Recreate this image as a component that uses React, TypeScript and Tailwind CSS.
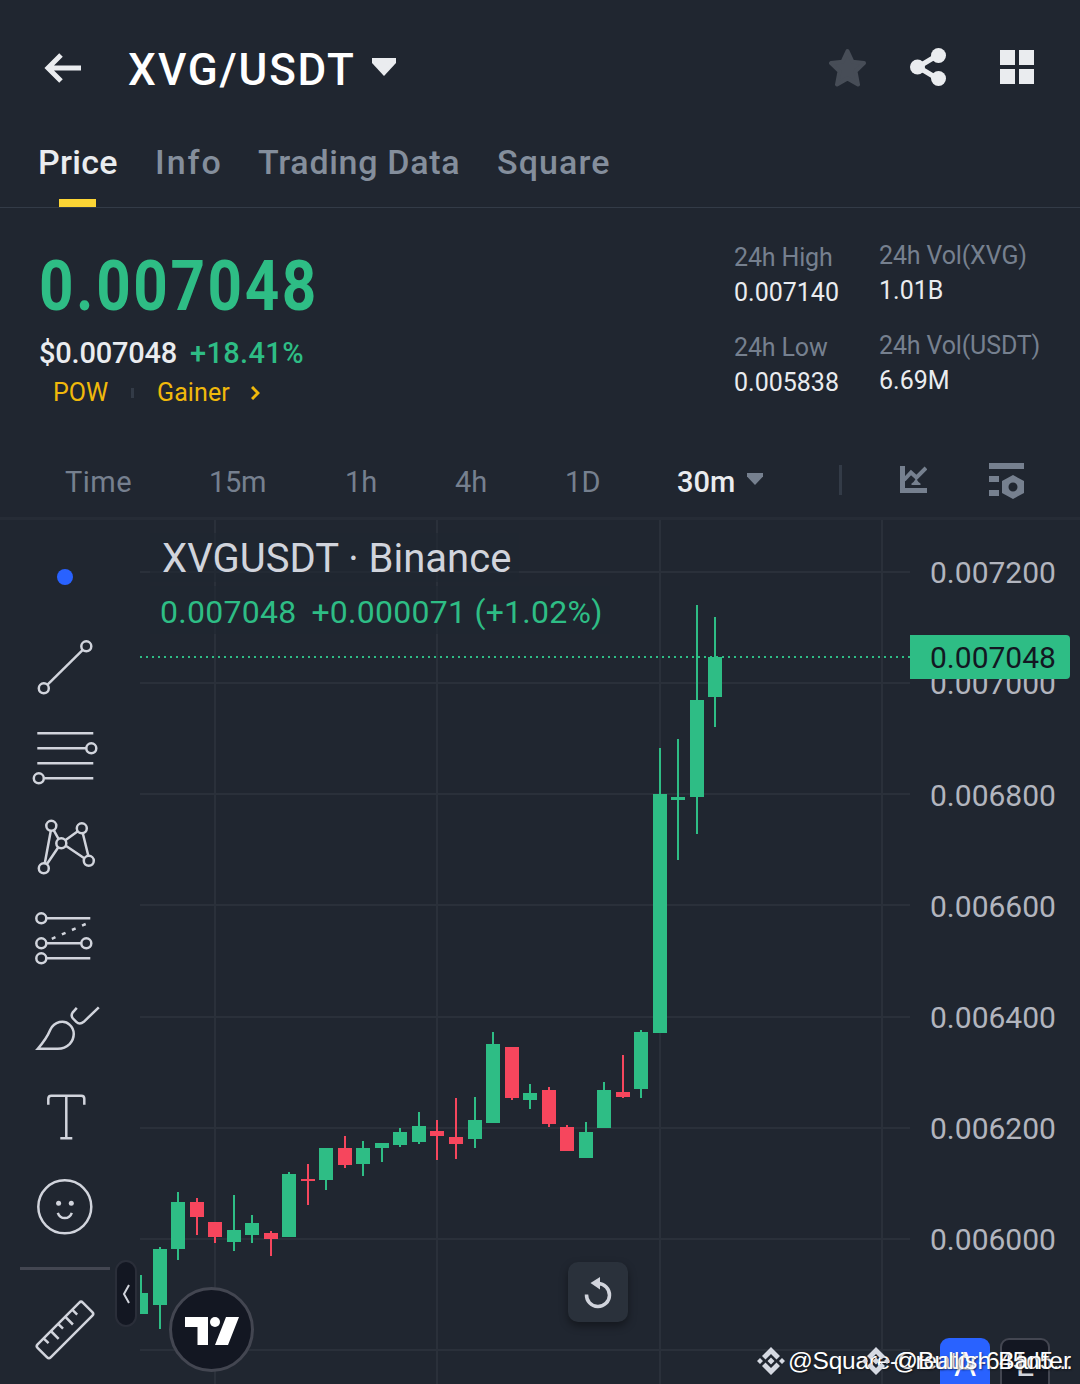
import { ReactNode } from "react"
import clsx from "clsx"

type Candle = { x: number; top: number; bottom: number; high: number; low: number; down?: boolean }

// pixel geometry inside the 770x864 chart pane
const candles: Candle[] = [
    { x: 0, top: 773, bottom: 794, high: 755, low: 794 },
    { x: 20, top: 729, bottom: 785, high: 727, low: 809 },
    { x: 38, top: 682, bottom: 729, high: 672, low: 740 },
    { x: 57, top: 682, bottom: 697, high: 678, low: 715, down: true },
    { x: 75, top: 702, bottom: 717, high: 702, low: 723, down: true },
    { x: 94, top: 710, bottom: 722, high: 675, low: 731 },
    { x: 112, top: 703, bottom: 715, high: 695, low: 723 },
    { x: 131, top: 713, bottom: 719, high: 711, low: 736, down: true },
    { x: 149, top: 654, bottom: 717, high: 652, low: 717 },
    { x: 168, top: 659, bottom: 661, high: 644, low: 685, down: true },
    { x: 186, top: 628, bottom: 660, high: 628, low: 670 },
    { x: 205, top: 628, bottom: 645, high: 616, low: 648, down: true },
    { x: 223, top: 628, bottom: 644, high: 621, low: 656 },
    { x: 242, top: 623, bottom: 628, high: 623, low: 642 },
    { x: 260, top: 612, bottom: 625, high: 608, low: 627 },
    { x: 279, top: 606, bottom: 622, high: 592, low: 624 },
    { x: 297, top: 611, bottom: 616, high: 600, low: 640, down: true },
    { x: 316, top: 617, bottom: 624, high: 578, low: 639, down: true },
    { x: 335, top: 600, bottom: 619, high: 577, low: 628 },
    { x: 353, top: 524, bottom: 603, high: 512, low: 603 },
    { x: 372, top: 527, bottom: 578, high: 527, low: 580, down: true },
    { x: 390, top: 573, bottom: 580, high: 564, low: 589 },
    { x: 409, top: 570, bottom: 604, high: 567, low: 607, down: true },
    { x: 427, top: 607, bottom: 631, high: 605, low: 631, down: true },
    { x: 446, top: 612, bottom: 638, high: 602, low: 638 },
    { x: 464, top: 570, bottom: 608, high: 562, low: 608 },
    { x: 483, top: 572, bottom: 577, high: 535, low: 578, down: true },
    { x: 501, top: 512, bottom: 569, high: 510, low: 578 },
    { x: 520, top: 274, bottom: 513, high: 228, low: 513 },
    { x: 538, top: 277, bottom: 280, high: 219, low: 340 },
    { x: 557, top: 180, bottom: 277, high: 85, low: 314 },
    { x: 575, top: 137, bottom: 177, high: 97, low: 207 },
]

const rows = [51, 162, 273, 384, 496, 607, 718, 829]
const cols = [74, 296, 519, 741]
const prices = ["0.007200", "0.007000", "0.006800", "0.006600", "0.006400", "0.006200", "0.006000"]

function Header() {
    return (
        <header className="flex h-[136px] items-center pl-[44px] pr-[46px]">
            <svg className="h-[32px] w-[38px]" viewBox="0 0 38 32" fill="none" stroke="#eaecef" strokeWidth="5">
                <path d="M37 16H4M17 3L4 16l13 13" />
            </svg>
            <h1 className="ml-[46px] mt-[3px] w-[226px] whitespace-nowrap text-[44px] font-medium leading-none tracking-[1.800px] text-white">XVG/USDT</h1>
            <svg className="ml-[18px] mb-[3px] h-[18px] w-[24px]" viewBox="0 0 24 18" fill="#eaecef">
                <path d="M0 0h24v5L12 18 0 5z" />
            </svg>
            <div className="mb-[2px] ml-auto flex items-center">
                <svg className="h-[40px] w-[38px]" viewBox="0 0 38 40" fill="#474d57" stroke="#474d57" strokeWidth="4" strokeLinejoin="round">
                    <path d="M18.500 4l5 10.800 11.500 1.300-8.500 8.200 2.500 13.200-10.500-6-10.500 6 2.500-13.200L2 16.100l11.500-1.300z" />
                </svg>
                <svg className="ml-[43px] h-[40px] w-[36px]" viewBox="0 0 36 40" fill="#eaecef">
                    <path d="M28 8L8 20l20 12" fill="none" stroke="#eaecef" strokeWidth="5" />
                    <circle cx="28.500" cy="8.500" r="7.500" />
                    <circle cx="7.500" cy="20" r="7.500" />
                    <circle cx="28.500" cy="31.500" r="7.500" />
                </svg>
                <svg className="ml-[54px] h-[34px] w-[34px]" viewBox="0 0 34 34" fill="#eaecef">
                    <path d="M0 0h15v15H0zM19 0h15v15H19zM0 19h15v15H0zM19 19h15v15H19z" />
                </svg>
            </div>
        </header>
    )
}

function Tabs() {
    return (
        <nav className="flex h-[72px] border-b border-[#333b47] pl-[38px] text-[34px] font-medium leading-[52px] text-[#848e9c]">
            <div className="flex w-[117px] flex-col text-[#eaecef]">
                <span className="h-[63px] whitespace-nowrap tracking-[0.300px]">Price</span>
                <span className="ml-[21px] h-[8px] w-[37px] bg-[#fcd535]" />
            </div>
            <span className="w-[103px] whitespace-nowrap tracking-[2px]">Info</span>
            <span className="w-[239px] whitespace-nowrap tracking-[0.700px]">Trading Data</span>
            <span className="whitespace-nowrap tracking-[1.100px]">Square</span>
        </nav>
    )
}

function Stat({ label, value }: { label: string; value: string }) {
    return (
        <div className="h-[90px] whitespace-nowrap text-[25px] leading-[35px]">
            <div className="tracking-[-0.150px] text-[#76808f]">{label}</div>
            <div className="text-[#eaecef]">{value}</div>
        </div>
    )
}

function PriceSummary() {
    return (
        <section className="flex h-[234px]">
            <div className="w-[734px] pl-[39px] pt-[42px]">
                <div className="h-[72px] origin-left scale-x-[0.86] whitespace-nowrap text-[70px] font-bold leading-[73px] tracking-[3px] text-[#2ebd85]">0.007048</div>
                <div className="mt-[12px] flex h-[40px] items-center whitespace-nowrap text-[29px] font-medium">
                    <span className="w-[151px] tracking-[-0.200px] text-[#eaecef]">$0.007048</span>
                    <span className="tracking-[0.350px] text-[#2ebd85]">+18.41%</span>
                </div>
                <div className="flex h-[38px] items-center pl-[14px] text-[25px] text-[#f0b90b]">
                    <span className="w-[78px]">POW</span>
                    <span className="h-[10px] w-[3px] bg-[#333b47]" />
                    <span className="ml-[23px] w-[94px] tracking-[0.100px]">Gainer</span>
                    <svg className="h-[14px] w-[9px]" viewBox="0 0 9 14" fill="none" stroke="#f0b90b" strokeWidth="3">
                        <path d="M1 1l6 6-6 6" />
                    </svg>
                </div>
            </div>
            <div className="w-[145px] pt-[32px]">
                <Stat label="24h High" value="0.007140" />
                <Stat label="24h Low" value="0.005838" />
            </div>
            <div className="pt-[30px]">
                <Stat label="24h Vol(XVG)" value="1.01B" />
                <Stat label="24h Vol(USDT)" value="6.69M" />
            </div>
        </section>
    )
}

function Intervals() {
    return (
        <div className="flex h-[75px] items-center whitespace-nowrap pl-[65px] pt-[7px] text-[29px] text-[#76808f]">
            <span className="w-[144px] tracking-[0.500px]">Time</span>
            <span className="w-[136px] tracking-[-0.300px]">15m</span>
            <span className="w-[110px]">1h</span>
            <span className="w-[110px]">4h</span>
            <span className="w-[112px] tracking-[0.300px]">1D</span>
            <span className="w-[70px] font-medium text-[#eaecef]">30m</span>
            <svg className="mb-[8px] h-[12px] w-[16px]" viewBox="0 0 16 12" fill="#76808f">
                <path d="M0 0h16v3.500L8 12 0 3.500z" />
            </svg>
            <span className="ml-[76px] mb-[7px] h-[30px] w-[3px] bg-[#333b47]" />
            <svg className="ml-[58px] mb-[7px] h-[28px] w-[27px]" viewBox="0 0 27 28" fill="none" stroke="#76808f" strokeWidth="5">
                <path d="M2.500 0v24.500H27" />
                <path d="M4 14l7-7.500 5.500 5L26 2" strokeWidth="4" />
                <path d="M16 12.500l2.500 3.500 2 1.500V19h-9v-1.500l2-1.500z" fill="#76808f" stroke="none" />
            </svg>
            <svg className="ml-[62px] mb-[5px] h-[36px] w-[35px]" viewBox="0 0 35 36" fill="#76808f">
                <path d="M0 0h35v6H0zM0 13h10v6H0zM0 27h10v6H0z" />
                <path fillRule="evenodd" d="M24 12l11 6v12l-11 6-11-6V18zM24 19.500a4.500 4.500 0 100 9 4.500 4.500 0 000-9z" />
            </svg>
        </div>
    )
}

function Tool({ className, children }: { className?: string; children: ReactNode }) {
    return (
        <div className={clsx("flex h-[90px] items-center", className)}>
            <svg className="h-[90px] w-[70px]" viewBox="-0.3 9.7 70 90" fill="none" stroke="#d1d4dc" strokeWidth="2.500">
                {children}
            </svg>
        </div>
    )
}

function Toolbar() {
    return (
        <aside className="flex w-[140px] shrink-0 flex-col pl-[30px]">
            <div className="ml-[27px] mt-[49px] h-[16px] w-[16px] shrink-0 rounded-full bg-[#2962ff]" />
            <Tool className="mt-[47px]">
                <circle cx="56" cy="24" r="5" />
                <circle cx="13.500" cy="66" r="5" />
                <path d="M17 62.500L52.500 27.500" />
            </Tool>
            <Tool>
                <path d="M7 21h56M7 36h49M7 51h56M14 66h49" />
                <circle cx="61" cy="36" r="5" />
                <circle cx="8.500" cy="66" r="5" />
            </Tool>
            <Tool>
                <circle cx="21" cy="23.500" r="5" />
                <circle cx="51.500" cy="26" r="5" />
                <circle cx="31" cy="41" r="5" />
                <circle cx="58.500" cy="58.500" r="5" />
                <circle cx="13.500" cy="66" r="5" />
                <path d="M20.500 28.500L14.500 61M23.500 28l5 9M28 45L16.500 62M35 38l12.500-9M35.500 43.500L54 56M52.500 31l5.500 22.500" />
            </Tool>
            <Tool>
                <path d="M16 26h44M16 51h35M16 66h44" />
                <path d="M21.500 46.500L56.500 31.200" strokeDasharray="4 7" />
                <circle cx="11" cy="26" r="5" />
                <circle cx="11" cy="51" r="5" />
                <circle cx="56" cy="51" r="5" />
                <circle cx="11" cy="66" r="5" />
            </Tool>
            <Tool>
                <path d="M7.500 66.500c7-8 10-13 12.500-19 4-8.500 14-10.500 19.500-5 5.500 5 5 13.500 0 19-3.500 3.500-7 5-12 5zM46.500 25.500l-4 4.500c-1.500 2-1.500 4 0 6l3.500 3.500c2 2 5 2 7.500 0l15-14.500" />
            </Tool>
            <Tool>
                <path d="M18 32.500v-6c0-2 1-3 3-3h30c2 0 3 1 3 3v6M36 23.500v42.500M30 66h12" />
            </Tool>
            <Tool>
                <circle cx="34.500" cy="44.500" r="26.500" />
                <circle cx="28.300" cy="41" r="2.500" fill="#d1d4dc" stroke="none" />
                <circle cx="41" cy="41" r="2.500" fill="#d1d4dc" stroke="none" />
                <path d="M27.500 50.500c2.500 7 11.500 7 14 0" />
            </Tool>
            <div className="-ml-[10px] mt-[5px] h-[3px] w-[90px] shrink-0 bg-[#434651]" />
            <Tool className="mt-[15px]">
                <g transform="translate(34.500 54.500) rotate(45)">
                    <rect x="-9" y="-32" width="18.500" height="64" rx="2.500" />
                    <path d="M-9 21h7M-9 10.700h11M-9 0.500h7M-9 -9.500h11M-9 -19.500h7" />
                </g>
            </Tool>
        </aside>
    )
}

function Chart() {
    return (
        <svg className="h-[864px] w-[770px] shrink-0" viewBox="0 0 770 864" shapeRendering="crispEdges">
            {rows.map((y) => (
                <rect key={y} x={0} y={y} width={770} height={2} fill="#2a303a" />
            ))}
            {cols.map((x) => (
                <rect key={x} x={x} y={-3} width={2} height={867} fill="#2a303a" />
            ))}
            <rect x={10} y={13} width={369} height={49} fill="#202630" fillOpacity={0.6} />
            <rect x={10} y={66} width={460} height={48} fill="#202630" fillOpacity={0.6} />
            <line x1={0} x2={770} y1={137} y2={137} stroke="#2ebd85" strokeWidth={2} strokeDasharray="2 4" />
            {candles.map((c) => (
                <g key={c.x} fill={c.down ? "#f6465d" : "#2ebd85"}>
                    <rect x={c.x === 0 ? 0 : c.x - 1} y={c.high} width={2} height={c.low - c.high} />
                    <rect x={c.x === 0 ? 0 : c.x - 7} y={c.top} width={c.x === 0 ? 8 : 14} height={c.bottom - c.top} />
                </g>
            ))}
        </svg>
    )
}

function PriceAxis() {
    return (
        <div className="-mt-[2.800px] flex w-[170px] shrink-0 flex-col pl-[20px] text-[30px] text-[#b2b5be]">
            {prices.map((p) => (
                <div key={p} className="flex h-[111.170px] shrink-0 items-center">{p}</div>
            ))}
        </div>
    )
}

function BinanceMark() {
    return (
        <svg className="h-[28px] w-[28px] shrink-0" viewBox="0 0 28 28" fill="#d5d9e2">
            <path d="M14 0l9 9-3.500 3.500L14 7l-5.500 5.500L5 9zM14 28l9-9-3.500-3.500L14 21l-5.500-5.500L5 19zM14 10.500l3.500 3.500-3.500 3.500-3.500-3.500zM3 11l3 3-3 3-3-3zM25 11l3 3-3 3-3-3z" />
        </svg>
    )
}

function Watermark({ className, name }: { className: string; name: string }) {
    return (
        <div className={clsx("absolute flex items-center gap-[3px] whitespace-nowrap font-['Liberation_Sans',sans-serif] text-[24.500px] leading-[30px] text-white [text-shadow:1px_1px_2px_rgba(0,0,0,0.5)]", className)}>
            <BinanceMark />
            <span>{name}</span>
        </div>
    )
}

export default function App() {
    return (
        <div className="relative h-[1384px] w-[1080px] overflow-hidden bg-[#202630] font-['Roboto',sans-serif]">
            <Header />
            <Tabs />
            <PriceSummary />
            <Intervals />
            <div className="h-[3px] bg-[#262c36]" />
            <main className="flex h-[864px]">
                <Toolbar />
                <Chart />
                <PriceAxis />
            </main>

            {/* chart legend */}
            <div className="absolute left-[161px] top-[535px] whitespace-nowrap">
                <div className="pl-[1px] text-[40px] leading-[48px] text-[#d1d4dc]">XVGUSDT · Binance</div>
                <div className="-ml-[1px] mt-[7px] flex gap-[15px] text-[32px] leading-[44px] tracking-[0.260px] text-[#2ebd85]">
                    <span>0.007048</span>
                    <span>+0.000071 (+1.02%)</span>
                </div>
            </div>

            <div className="absolute left-[910px] top-[635px] flex h-[44px] w-[160px] items-center rounded-r-[4px] bg-[#2ebd85] pl-[20px] text-[30px] text-[#131722]">0.007048</div>

            <button className="absolute left-[115px] top-[1260px] flex h-[67px] w-[22px] items-center justify-center rounded-full border-2 border-[#2a2e39] bg-[#131722]">
                <svg className="h-[20px] w-[8px]" viewBox="0 0 8 20" fill="none" stroke="#d1d4dc" strokeWidth="2">
                    <path d="M7 1L2 10l5 9" />
                </svg>
            </button>

            <div className="absolute left-[169px] top-[1287px] flex h-[85px] w-[85px] items-center justify-center rounded-full border-[3px] border-[#434651] bg-[#131722]">
                <svg className="mt-[2px] h-[28px] w-[54px]" viewBox="0 0 54 28" fill="#fff">
                    <path d="M0 0h23v28H12.500V10H0zM41 0h13L43 28H30z" />
                    <circle cx="30" cy="5" r="5" />
                </svg>
            </div>

            <button className="absolute left-[568px] top-[1262px] flex h-[60px] w-[60px] items-center justify-center rounded-[10px] bg-[#2a313b] shadow-[0_4px_8px_rgba(0,0,0,0.4)]">
                <svg className="mt-[2px] h-[32px] w-[28px]" viewBox="0 0 28 32" fill="none" stroke="#d1d4dc" strokeWidth="3.500">
                    <path d="M2.500 17.500A11.500 11.500 0 1 0 14 6.500" />
                    <path d="M6.500 6L16 0v12.500z" fill="#d1d4dc" stroke="none" />
                </svg>
            </button>

            <button className="absolute left-[940px] top-[1338px] flex h-[52px] w-[50px] justify-center rounded-t-[9px] bg-[#2962ff] pt-[6px] text-[34px] leading-[40px] text-white">A</button>
            <button className="absolute left-[1000px] top-[1338px] flex h-[52px] w-[50px] justify-center rounded-t-[9px] border-2 border-[#434651] bg-[#131722] pt-[4px] text-[34px] leading-[40px] text-[#d1d4dc]">L</button>

            <Watermark className="left-[757px] top-[1346px] tracking-[-0.250px]" name="@Square-Creator-645d5..." />
            <Watermark className="left-[862px] top-[1346px] tracking-[0.150px]" name="@Bullish Banter" />
        </div>
    )
}
